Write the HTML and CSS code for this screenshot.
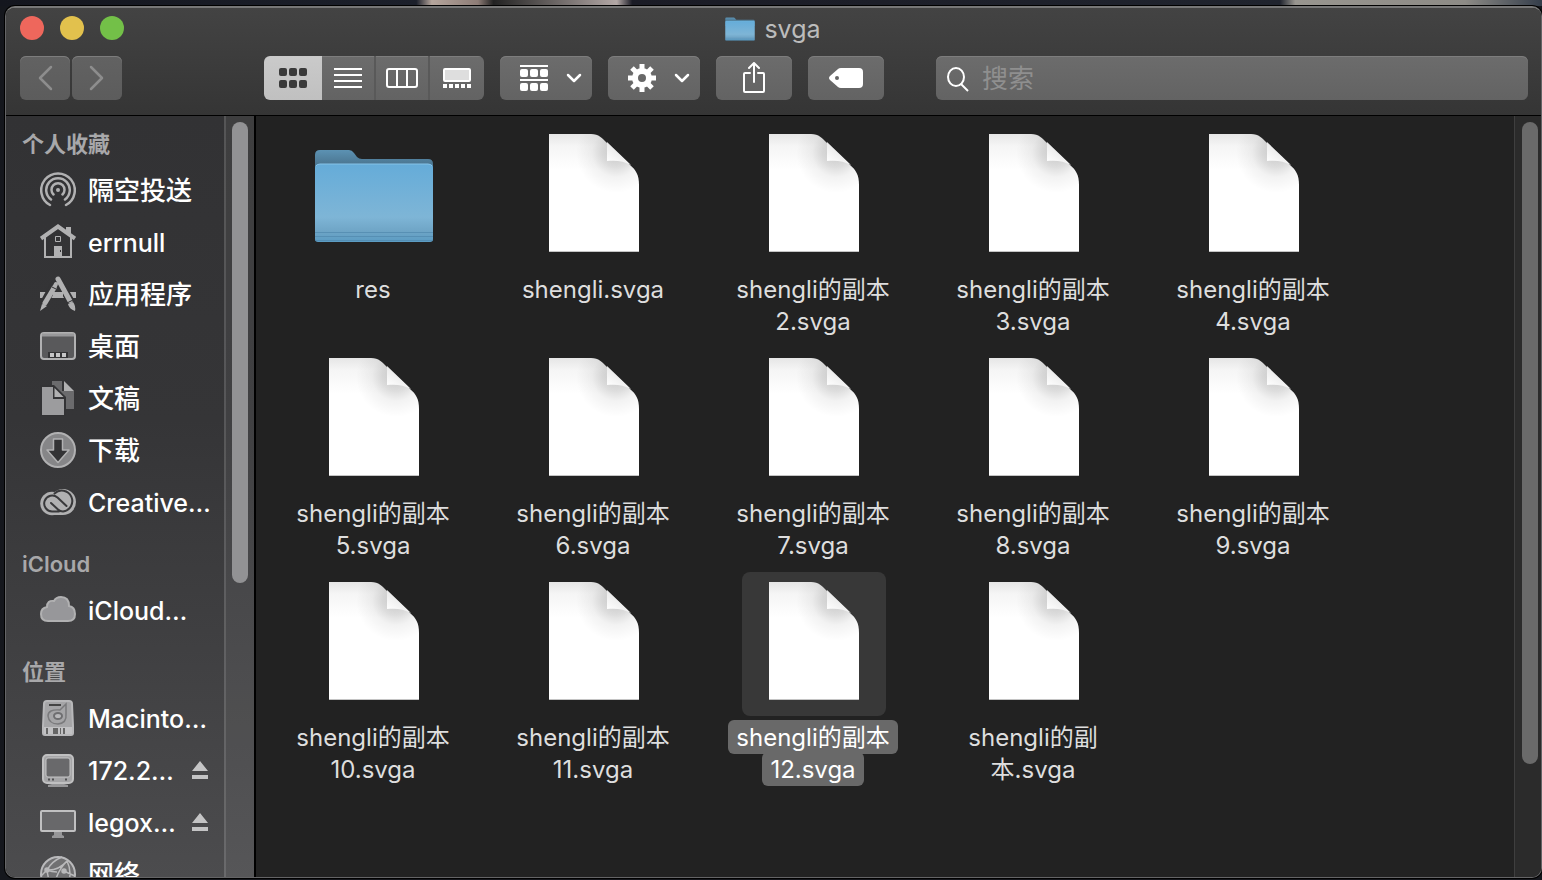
FILE: index.html
```
<!DOCTYPE html>
<html lang="zh-CN">
<head>
    <meta charset="UTF-8">
    <title>svga</title>
    <meta name="viewport" content="width=device-width, initial-scale=1.0">
    <link rel="stylesheet" href="styles.css">
</head>
<body>

<!-- Shared icons -->
<svg class="defs" width="0" height="0" aria-hidden="true">
    <defs>
        <linearGradient id="folderFront" x1="0" y1="0" x2="0" y2="1">
            <stop offset="0" stop-color="#65acd9"/>
            <stop offset="0.68" stop-color="#7eb5d6"/>
            <stop offset="0.86" stop-color="#6fa5c6"/>
            <stop offset="1" stop-color="#5b9cc3"/>
        </linearGradient>
        <linearGradient id="folderBack" x1="0" y1="0" x2="0" y2="1">
            <stop offset="0" stop-color="#5c92b3"/>
            <stop offset="0.5" stop-color="#48718b"/>
            <stop offset="1" stop-color="#48718b"/>
        </linearGradient>
        <linearGradient id="pageTop" x1="0" y1="0" x2="0" y2="1">
            <stop offset="0" stop-color="#e6e6e6"/>
            <stop offset="0.1" stop-color="#f5f5f5"/>
            <stop offset="0.3" stop-color="#ffffff"/>
        </linearGradient>
        <radialGradient id="pageShade" gradientUnits="userSpaceOnUse" cx="94" cy="29" r="40">
            <stop offset="0" stop-color="#000" stop-opacity="0.2"/>
            <stop offset="0.35" stop-color="#000" stop-opacity="0.13"/>
            <stop offset="0.6" stop-color="#000" stop-opacity="0.05"/>
            <stop offset="1" stop-color="#000" stop-opacity="0"/>
        </radialGradient>
        <linearGradient id="pageFold" x1="0.2" y1="1" x2="0.7" y2="0.3">
            <stop offset="0" stop-color="#ffffff"/>
            <stop offset="1" stop-color="#e6e6e6"/>
        </linearGradient>
    </defs>
    <symbol id="folder" viewBox="0 0 120 96">
        <path d="M1 7q0-5 5-5h29q3 0 5 3l3 4q2 2 5 2h66q5 0 5 5v20H1z" fill="url(#folderBack)"/>
        <path d="M1 20q0-4 4-4h110q4 0 4 4v71q0 3-3 3H4q-3 0-3-3z" fill="url(#folderFront)"/>
        <path d="M2 18q1-2 4-2h108q3 0 4 2" fill="none" stroke="#86c3e8"/>
        <path d="M1 84.500h118M1 88.500h118M1 92.500h118" stroke="#5088ac" stroke-opacity="0.7"/>
    </symbol>
    <symbol id="page" viewBox="0 0 144 144">
        <path d="M27 10H69C77 10 80 14 85 19L108 41C114 46 117 51 117 61V128H27z" fill="url(#pageTop)"/>
        <path d="M27 10H69C77 10 80 14 85 19L108 41C114 46 117 51 117 61V128H27z" fill="url(#pageShade)"/>
        <path d="M85 18V37C94 36 102 37 109 41z" fill="url(#pageFold)"/>
        <path d="M27 127.500h90" stroke="#c4c4c4"/>
    </symbol>
    <symbol id="chevron" viewBox="0 0 16 10">
        <path d="M2 2l6 6 6-6" fill="none" stroke="#fff" stroke-width="2.500" stroke-linecap="round" stroke-linejoin="round"/>
    </symbol>
    <symbol id="eject" viewBox="0 0 16 18">
        <path d="M8 0l8 10H0zM0 14h16v4H0z" fill="#c4c4c5"/>
    </symbol>
</svg>

<div class="window">
    <header class="toolbar">
        <div class="titlebar">
            <div class="lights">
                <button class="light close" aria-label="关闭"></button>
                <button class="light minimize" aria-label="最小化"></button>
                <button class="light zoom" aria-label="缩放"></button>
            </div>
            <h1 class="title"><svg width="30" height="24"><use href="#folder"/></svg>svga</h1>
        </div>
        <div class="tools">
            <div class="nav">
                <button class="btn" aria-label="后退">
                    <svg width="16" height="26"><path d="M14 2L3 13l11 11" fill="none" stroke="#8d8d8d" stroke-width="2.500" stroke-linecap="round" stroke-linejoin="round"/></svg>
                </button>
                <button class="btn" aria-label="前进">
                    <svg width="16" height="26"><path d="M2 2l11 11L2 24" fill="none" stroke="#8d8d8d" stroke-width="2.500" stroke-linecap="round" stroke-linejoin="round"/></svg>
                </button>
            </div>
            <div class="views">
                <button class="view active" aria-label="图标">
                    <svg width="28" height="20" fill="#3a3a3a"><rect width="8" height="8" rx="2"/><rect x="10" width="8" height="8" rx="2"/><rect x="20" width="8" height="8" rx="2"/><rect y="12" width="8" height="8" rx="2"/><rect x="10" y="12" width="8" height="8" rx="2"/><rect x="20" y="12" width="8" height="8" rx="2"/></svg>
                </button>
                <button class="view" aria-label="列表">
                    <svg width="28" height="20"><path d="M0 1h28M0 7h28M0 13h28M0 19h28" stroke="#fff" stroke-width="2"/></svg>
                </button>
                <button class="view" aria-label="分栏">
                    <svg width="32" height="20" fill="none" stroke="#fff" stroke-width="2"><rect x="1" y="1" width="30" height="18" rx="2"/><path d="M11 1v18M21 1v18"/></svg>
                </button>
                <button class="view" aria-label="画廊">
                    <svg width="28" height="20"><rect x="1" y="1" width="26" height="12" rx="1" fill="#dedede" stroke="#fff" stroke-width="2"/><path d="M0 18h28" stroke="#fff" stroke-width="4" stroke-dasharray="4 2"/></svg>
                </button>
            </div>
            <button class="btn menu" aria-label="分组">
                <svg width="28" height="26" fill="#fff"><rect width="28" height="2"/><rect y="14" width="28" height="2"/><rect y="4" width="8" height="8" rx="2"/><rect x="10" y="4" width="8" height="8" rx="2"/><rect x="20" y="4" width="8" height="8" rx="2"/><rect y="18" width="8" height="8" rx="2"/><rect x="10" y="18" width="8" height="8" rx="2"/><rect x="20" y="18" width="8" height="8" rx="2"/></svg>
                <svg width="16" height="10"><use href="#chevron"/></svg>
            </button>
            <button class="btn menu" aria-label="操作">
                <svg width="28" height="28" viewBox="-14 -14 28 28" stroke="#fff">
                    <circle r="7" fill="none" stroke-width="6"/>
                    <path d="M0-14V-9M0 14V9M-14 0H-9M14 0H9M-10-10l4 4M10 10l-4-4M-10 10l4-4M10-10l-4 4" stroke-width="5"/>
                </svg>
                <svg width="16" height="10"><use href="#chevron"/></svg>
            </button>
            <button class="btn wide" aria-label="共享">
                <svg width="24" height="32" fill="none" stroke="#fff" stroke-width="2" stroke-linecap="round" stroke-linejoin="round"><path d="M8 11H3q-1 0-1 1v17q0 1 1 1h18q1 0 1-1V12q0-1-1-1h-5M12 20V1M7 6l5-5 5 5"/></svg>
            </button>
            <button class="btn wide" aria-label="标签">
                <svg width="34" height="20"><path d="M9 1q1-1 3-1h18q4 0 4 4v12q0 4-4 4H12q-2 0-3-1L1 12q-2-2 0-4z" fill="#fff"/><circle cx="8" cy="10" r="2" fill="#666"/></svg>
            </button>
            <label class="search">
                <svg width="24" height="28" fill="none" stroke="#fff" stroke-width="2"><ellipse cx="10" cy="13" rx="8" ry="9"/><path d="M15 20l7 7"/></svg>
                <input type="text" placeholder="搜索" aria-label="搜索">
            </label>
        </div>
    </header>

    <div class="main">
        <nav class="sidebar">
            <h2>个人收藏</h2>
            <a href="#">
                <svg width="36" height="36" fill="none" stroke="#b1b1b2" stroke-width="2.500" stroke-linecap="round"><path d="M10 33A16.800 16.800 0 1 1 26 33M11 27.500A11.800 11.800 0 1 1 25 27.500M13.500 22.500A6.500 6.500 0 1 1 22.500 22.500"/><circle cx="18" cy="18" r="2" fill="#b1b1b2" stroke="none"/></svg>
                <span>隔空投送</span>
            </a>
            <a href="#" class="latin">
                <svg width="36" height="36" fill="none" stroke="#b1b1b2"><path d="M26 9V3h5v9z" fill="#b1b1b2" stroke="none"/><path d="M1 14.500L18 2.500l17 12" stroke-width="4"/><path d="M5 13v20h26V13" stroke-width="2"/><path d="M14 22h8v11h-8z" fill="#b1b1b2" stroke="none"/><path d="M15.500 12.500h5v5h-5z"/><path d="M20.500 26v2" stroke="#333335"/></svg>
                <span>errnull</span>
            </a>
            <a href="#">
                <svg width="36" height="36" fill="none" stroke="#b1b1b2"><path d="M0 19h36" stroke-width="6"/><path d="M18 3L32 28M15 7L4 27" stroke="#333335" stroke-width="8"/><path d="M13 19h10" stroke-width="6"/><path d="M18 3l12 22M14 12L5 27" stroke-width="5" stroke-linecap="round"/><path d="M16 8l-1 2" stroke-width="4" stroke-linecap="round"/><path d="M2 28l5 2-7 5zM28 28l5-2q3 4 2 9-6-2-7-7z" fill="#b1b1b2" stroke="none"/><path d="M12 11l4 2M27 27l6-3" stroke="#333335"/></svg>
                <span>应用程序</span>
            </a>
            <a href="#">
                <svg width="36" height="36"><rect x="1" y="5" width="34" height="26" rx="3" fill="#59595b" stroke="#b1b1b2" stroke-width="2"/><path d="M2 7h32" stroke="#98989a" stroke-width="3"/><path d="M8 24h20v6H8z" fill="#333335"/><path d="M10 25h4v4h-4zM16 25h4v4h-4zM22 25h4v4h-4z" fill="#c5c5c6"/></svg>
                <span>桌面</span>
            </a>
            <a href="#">
                <svg width="36" height="36"><path d="M12 1h10v10h12v18H12z" fill="#6b6b6d"/><path d="M24 1l10 10H24z" fill="#b1b1b2"/><path d="M0 5h14l12 12v19H0z" fill="#333335"/><path d="M2 7h11v12h11v16H2z" fill="#9c9c9e"/><path d="M14.500 8l9 9h-9z" fill="#b1b1b2"/></svg>
                <span>文稿</span>
            </a>
            <a href="#">
                <svg width="36" height="36"><circle cx="18" cy="18" r="17" fill="#868688" stroke="#b1b1b2" stroke-width="2"/><path d="M13.500 7h9v11H29L18 30.500 7 18h6.500z" fill="#333335" stroke="#b1b1b2" stroke-width="1.500" stroke-linejoin="round"/></svg>
                <span>下载</span>
            </a>
            <a href="#" class="latin">
                <svg width="36" height="36" fill="none" stroke="#39393b" stroke-width="2"><g fill="#b1b1b2" stroke="none"><circle cx="23" cy="18" r="13"/><circle cx="12" cy="19.500" r="11.800"/><path d="M12 25h11v6H12z"/></g><path d="M19 27.500h-7a8 8 0 1 1 5.500-14l9 8.500M14.500 9.500a10.500 10.500 0 1 1 8.500 18q-3 0-5-2l-7-6.500" stroke-linecap="round"/></svg>
                <span>Creative…</span>
            </a>

            <h2>iCloud</h2>
            <a href="#" class="latin">
                <svg width="36" height="36"><path d="M8 29q-7 0-7-7 0-6 6-7 0-7 7-6 2-4 7-4 8 0 8 9 6 1 6 8 0 7-7 7z" fill="#97979a" stroke="#b1b1b2" stroke-width="2"/></svg>
                <span>iCloud…</span>
            </a>

            <h2>位置</h2>
            <a href="#" class="latin">
                <svg width="36" height="36"><path d="M7 1h22q3 0 3 3l1 22v7q0 2-2 2H5q-2 0-2-2v-7L4 4q0-3 3-3z" fill="#a5a5a7" stroke="#b8b8ba" stroke-width="2"/><path d="M4 27h28v7H4z" fill="#c2c2c4"/><path d="M6 28h2v6H6zM13 28h5v6h-5zM20 28h1v6h-1zM23 28h2v6h-2z" fill="#666"/><path d="M9 5h12" stroke="#444" stroke-width="2"/><path d="M26 4L20 10Q8 9 8 16q1 8 10 8 9-1 8-10z" fill="none" stroke="#7a7a7c" stroke-width="1.500"/><ellipse cx="18" cy="16" rx="4" ry="3" fill="#b8b8ba" stroke="#6e6e70" stroke-width="2"/></svg>
                <span>Macinto…</span>
            </a>
            <a href="#" class="latin">
                <svg width="36" height="36"><path d="M12 31h12v1l4 1v2H8v-2l4-1z" fill="#969698"/><rect x="3" y="3" width="30" height="28" rx="4" fill="#a5a5a7" stroke="#c0c0c1" stroke-width="2"/><rect x="6" y="6" width="24" height="19" rx="2" fill="#69696b" stroke="#c4c4c5"/><path d="M8 27.500h6M25 27.500h4" stroke="#505052" stroke-width="2" stroke-dasharray="2 2"/></svg>
                <span>172.2…</span>
                <svg class="eject" width="16" height="18"><use href="#eject"/></svg>
            </a>
            <a href="#" class="latin">
                <svg width="36" height="36"><path d="M14 28h8v3l2 1v2H12v-2l2-1z" fill="#969698"/><rect x="1" y="7" width="34" height="20" rx="1" fill="#68686a" stroke="#c0c0c1" stroke-width="2"/></svg>
                <span>legox…</span>
                <svg class="eject" width="16" height="18"><use href="#eject"/></svg>
            </a>
            <a href="#">
                <svg width="36" height="36" fill="none" stroke="#b9b9bb" stroke-width="1.500"><circle cx="18" cy="18" r="17" fill="#707072" stroke-width="2"/><path d="M7 14q11 1 20-9M7 14Q12 5 22 1M7 14l-6 6M7 14q2 14 6 20M27 5q-12 12-13 29M27 5q6 12 0 26M24 15q6 3 11 5M7 14q5 2 10 2"/><circle cx="7" cy="14" r="2" fill="#b9b9bb"/><circle cx="24" cy="15" r="2" fill="#b9b9bb"/></svg>
                <span>网络</span>
            </a>
        </nav>
        <div class="scroller side"><div class="thumb"></div></div>

        <ul class="files">
            <li class="file"><div class="icon"><svg width="120" height="96"><use href="#folder"/></svg></div><p><span>res</span></p></li>
            <li class="file"><div class="icon"><svg width="144" height="144"><use href="#page"/></svg></div><p><span>shengli.svga</span></p></li>
            <li class="file"><div class="icon"><svg width="144" height="144"><use href="#page"/></svg></div><p><span>shengli的副本 2.svga</span></p></li>
            <li class="file"><div class="icon"><svg width="144" height="144"><use href="#page"/></svg></div><p><span>shengli的副本 3.svga</span></p></li>
            <li class="file"><div class="icon"><svg width="144" height="144"><use href="#page"/></svg></div><p><span>shengli的副本 4.svga</span></p></li>
            <li class="file"><div class="icon"><svg width="144" height="144"><use href="#page"/></svg></div><p><span>shengli的副本 5.svga</span></p></li>
            <li class="file"><div class="icon"><svg width="144" height="144"><use href="#page"/></svg></div><p><span>shengli的副本 6.svga</span></p></li>
            <li class="file"><div class="icon"><svg width="144" height="144"><use href="#page"/></svg></div><p><span>shengli的副本 7.svga</span></p></li>
            <li class="file"><div class="icon"><svg width="144" height="144"><use href="#page"/></svg></div><p><span>shengli的副本 8.svga</span></p></li>
            <li class="file"><div class="icon"><svg width="144" height="144"><use href="#page"/></svg></div><p><span>shengli的副本 9.svga</span></p></li>
            <li class="file"><div class="icon"><svg width="144" height="144"><use href="#page"/></svg></div><p><span>shengli的副本 10.svga</span></p></li>
            <li class="file"><div class="icon"><svg width="144" height="144"><use href="#page"/></svg></div><p><span>shengli的副本 11.svga</span></p></li>
            <li class="file selected"><div class="icon"><svg width="144" height="144"><use href="#page"/></svg></div><p><span>shengli的副本 12.svga</span></p></li>
            <li class="file"><div class="icon"><svg width="144" height="144"><use href="#page"/></svg></div><p><span>shengli的副本.svga</span></p></li>
        </ul>
        <div class="scroller"><div class="thumb"></div></div>
    </div>
</div>

</body>
</html>
```
FILE: styles.css
```
* {
    box-sizing: border-box;
}
body {
    margin: 0;
    padding: 6px 0 2px 5px;
    height: 100vh;
    overflow: hidden;
    font-family: Inter, "Noto Sans CJK SC", sans-serif;
    color: #fff;
    background: linear-gradient(90deg, #14161e 0%, #1c202b 27%, #b5a59c 28%, #8d7c76 31%, #222 32%, #b3a8a6 40%, #1b1c26 41%, #20242e 83%, #98958f 84%, #8d8b86 95%, #343d4a 100%) top / 100% 6px no-repeat, #15171d;
}
svg {
    display: block;
    flex: none;
}
.defs {
    position: absolute;
}
button {
    padding: 0;
    border: none;
    font: inherit;
}
.window {
    height: 100%;
    display: flex;
    flex-direction: column;
    border: 1px solid #646466;
    border-top: 2px solid #777;
    border-radius: 10px;
    overflow: hidden;
    background: #222;
    box-shadow: 0 0 0 1px #000;
}

/* Toolbar */
.toolbar {
    flex: none;
    height: 108px;
    padding: 0 13px 0 14px;
    border-bottom: 1px solid #000;
    background: linear-gradient(#434343, #353535);
}
.titlebar {
    height: 48px;
    padding-bottom: 6px;
    display: grid;
    grid-template-columns: 1fr auto 1fr;
    align-items: center;
}
.lights {
    display: flex;
    gap: 16px;
    padding-bottom: 2px;
}
.light {
    width: 24px;
    height: 24px;
    border-radius: 50%;
}
.close {
    background: #ee675c;
}
.minimize {
    background: #e2c14d;
}
.zoom {
    background: #73c048;
}
.title {
    display: flex;
    align-items: center;
    gap: 9px;
    margin: 0;
    padding-right: 2px;
    font-size: 25px;
    line-height: 32px;
    font-weight: 400;
    color: #bcbcbc;
}
.tools {
    display: flex;
    gap: 16px;
}
.btn, .view, .search {
    height: 44px;
    background: linear-gradient(#6c6c6c, #636363);
    box-shadow: inset 0 1px #7d7d7d;
}
.btn, .view {
    display: flex;
    align-items: center;
    justify-content: center;
}
.btn, .search {
    border-radius: 6px;
}
.nav {
    display: flex;
    gap: 2px;
    margin-right: 126px;
}
.nav .btn {
    width: 50px;
    background: linear-gradient(#626262, #5c5c5c);
}
.views {
    display: flex;
    border-radius: 6px;
    overflow: hidden;
}
.view {
    width: 54px;
    border-right: 2px solid #595959;
}
.view:last-child {
    border-right: none;
}
.view.active {
    width: 58px;
    border-right: none;
    background: linear-gradient(#cacaca, #c0c0c0);
    box-shadow: none;
}
.menu {
    width: 92px;
    gap: 18px;
    padding-left: 10px;
}
.wide {
    width: 76px;
}
.search {
    flex: 1;
    min-width: 0;
    display: flex;
    align-items: center;
    gap: 12px;
    margin-left: 36px;
    padding: 0 10px;
}
.search input {
    flex: 1;
    min-width: 0;
    padding: 2px 0 0;
    border: none;
    outline: none;
    background: none;
    color: #fff;
    font: inherit;
    font-size: 26px;
    line-height: 36px;
}
.search input::placeholder {
    color: #8f8f8f;
}

/* Content */
.main {
    flex: 1;
    min-height: 0;
    display: flex;
    background: linear-gradient(#323234, #353537 40%, #3e3e40 65%, #4c4c4e) left / 250px 100% no-repeat;
}
.sidebar {
    flex: none;
    width: 218px;
    padding-top: 8px;
    overflow: hidden;
}
.sidebar h2 {
    margin: 16px 0 0;
    padding-left: 16px;
    font-size: 22px;
    line-height: 40px;
    font-weight: 600;
    color: #a8a8aa;
}
.sidebar h2:first-child {
    margin-top: 0;
}
.sidebar a {
    display: flex;
    align-items: center;
    gap: 12px;
    height: 52px;
    padding: 0 16px 0 34px;
    font-size: 26px;
    line-height: 36px;
    font-weight: 500;
    color: #fff;
    text-decoration: none;
    white-space: nowrap;
}
.sidebar span {
    padding-top: 2px;
}
.sidebar .latin {
    font-size: 25px;
}
.sidebar .eject {
    margin-left: auto;
}
.scroller {
    flex: none;
    width: 27px;
    padding: 6px 2px 0 7px;
    border-left: 1px solid #3f3f3f;
    background: #2b2b2b;
}
.scroller .thumb {
    width: 16px;
    height: 85%;
    border-radius: 8px;
    background: #6a6a6a;
}
.scroller.side {
    width: 32px;
    border-left: 2px solid rgba(255, 255, 255, 0.12);
    border-right: 2px solid #000;
    padding-left: 6px;
    background: rgba(255, 255, 255, 0.06);
}
.side .thumb {
    height: 61%;
    background: #929294;
}
.files {
    flex: 1;
    min-width: 0;
    margin: 0;
    padding: 8px 0 0 8px;
    list-style: none;
    display: grid;
    grid-template-columns: repeat(auto-fill, 220px);
    grid-auto-rows: 224px;
    align-content: start;
    overflow: hidden;
    background: #222;
}
.file {
    display: flex;
    flex-direction: column;
    align-items: center;
    gap: 6px;
}
.icon {
    width: 144px;
    height: 144px;
    display: flex;
    align-items: center;
    justify-content: center;
    border-radius: 8px;
}
.file p {
    width: 180px;
    margin: 0;
    padding-right: 2px;
    text-align: center;
    font-size: 24px;
    line-height: 32px;
    color: #dedede;
}
.file span {
    padding: 3px 8px 2px;
    border-radius: 6px;
    -webkit-box-decoration-break: clone;
    box-decoration-break: clone;
}
.selected .icon {
    background: #383838;
}
.selected span {
    background: #696969;
    color: #fff;
}
```
